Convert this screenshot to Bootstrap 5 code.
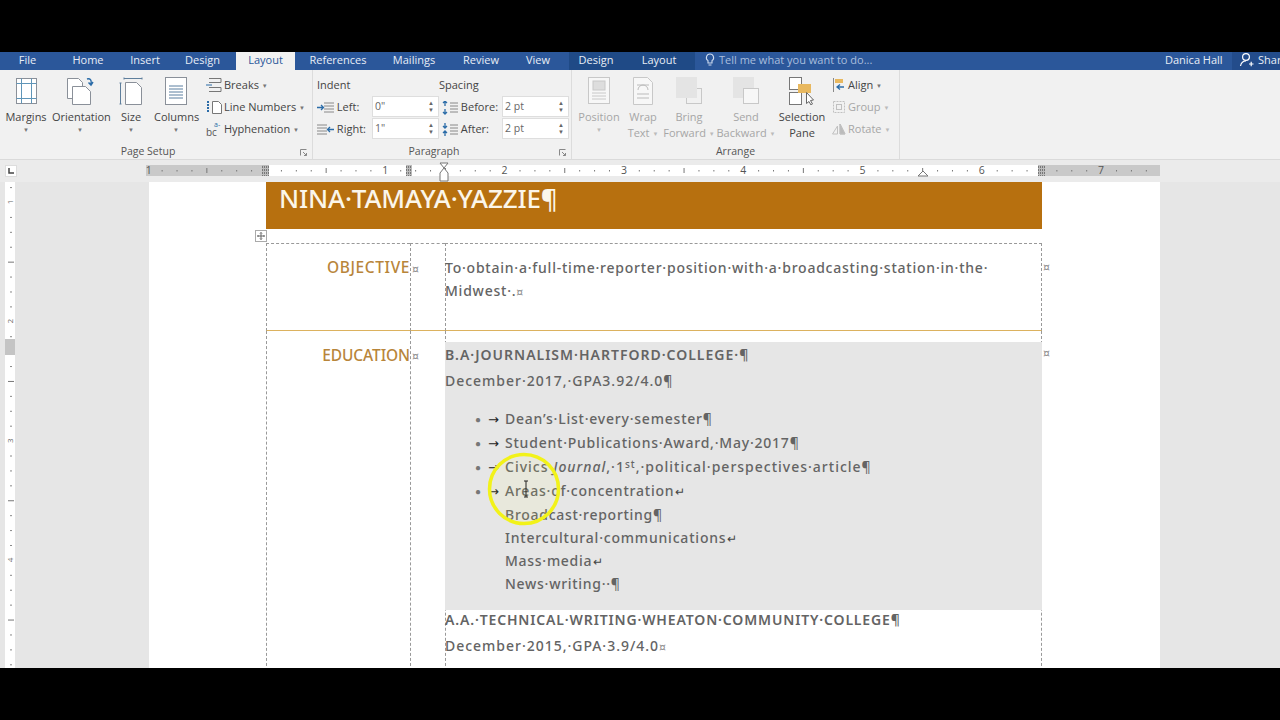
<!DOCTYPE html>
<html lang="en">
<head>
<meta charset="UTF-8">
<title>Word - Layout</title>
<link href="https://cdn.jsdelivr.net/npm/bootstrap@5.3.3/dist/css/bootstrap.min.css" rel="stylesheet">
<style>
html,body{margin:0;height:720px;overflow:hidden;background:#000}
.frame{width:1280px;height:616px;margin-top:52px;overflow:hidden;font-family:"Open Sans","Liberation Sans",sans-serif;font-size:11px;color:#444;background:#e6e6e6}
/* title / tab bar */
.tabbar{height:18px;background:#2b579a;color:#e8eef7;font-size:11px;line-height:15px}
.tabitem{text-align:center;flex:none}
.tabfile{width:55px}
.tabhome{width:66px}
.tabinsert{width:48px}
.tabdesign{width:67px}
.tablayout{width:59px;background:#f1f1f1;color:#2b579a}
.tabrefs{width:86px}
.tabmail{width:66px}
.tabreview{width:68px}
.tabview{width:46px}
.ctxband{background:#1f4a86;width:126px;flex:none;margin-left:8px}
.ctxdesign{width:54px}
.ctxlayout{width:72px}
.tellme{color:#a9bedd;width:470px;flex:none;padding-left:10px;padding-bottom:3px}
.username{width:67px;flex:none;white-space:nowrap}
.shareitem{background:#234c8b;width:48px;flex:none;padding-left:7px;padding-bottom:3px;white-space:nowrap;overflow:hidden}
.shareitem svg{flex:none}
/* ribbon */
.ribbon{height:90px;background:#f1f1f1;border-bottom:1px solid #dadada}
.rgroup{height:89px;border-right:1px solid #dcdcdc;position:relative}
.grouplabel{height:16px;line-height:16px;text-align:center;color:#555;font-size:10.5px;margin-top:auto}
.launcher{position:absolute;right:5px;bottom:3px}
.bigbtn{flex:none;text-align:center;line-height:15.5px;padding-top:7px;white-space:nowrap}
.bigbtn svg{display:block;margin:0 auto 4px;height:28px}
.caret{font-size:6px;line-height:11px;color:#777;display:block}
.inlinecaret{font-size:6px;color:#777;vertical-align:1px}
.dim{color:#a6a6a6}
.dim .caret,.dim .inlinecaret{color:#bbb}
.smallcol{padding-top:4px}
.smallbtn{height:22px;line-height:22px;white-space:nowrap}
.smallbtn svg{vertical-align:-4px;margin-right:2px}
.spinrow{height:22px;line-height:21px;white-space:nowrap}
.spinrow svg{vertical-align:-4px}
.spinlabel{width:56px}
.spinlabel2{width:63px;padding-left:3px}
.spinbox{width:67px;height:21px;background:#fff;border:1px solid #dedede;padding-left:2px;position:relative;flex:none;line-height:19px;font-size:10.5px;color:#666}
.spinarrows{position:absolute;right:4px;top:3px;font-size:6px;line-height:7px;color:#666}
/* rulers */
.rulerbar{height:22px;background:#ebebeb}
.cornerbtn{width:12px;height:12px;margin:5px 0 0 5px;background:#fff;border:1px solid #ddd}
.docarea{height:486px}
.vruler{width:10px;margin-left:5px;flex:none;background:#fff;height:486px;overflow:visible}
/* page */
.pagesheet{width:1011px;margin-left:134px;flex:none;background:#fff;height:486px;padding-left:117px;overflow:hidden;position:relative;font-family:"Noto Sans","Liberation Sans",sans-serif;font-size:14px;font-weight:500;letter-spacing:.77px;color:#646464}
.namebar{width:776px;height:47px;background:#b7700f;color:#fbf6ea;font-size:26px;line-height:33px;padding-left:13px;letter-spacing:-.16px}
.tablegrid{display:grid;grid-template-columns:144px 35px 597px 20px;margin-top:14px;width:796px}
.cellhead{border-left:1px dashed #999;color:#b8853a;text-align:right;font-size:15.5px}
.headobj{letter-spacing:.6px}
.headedu{letter-spacing:-.1px}
.cellgap{border-left:1px dashed #999;padding-left:1px}
.cellmain{border-left:1px dashed #999;border-right:1px dashed #999}
.cellinner{margin-left:-1px;margin-right:-1px}
.cellmark{color:#8b8b8b;font-family:"DejaVu Sans",sans-serif;font-size:11px;font-weight:400;letter-spacing:0}
.endmark{padding-left:1px}
.endfirst{padding-top:11px;line-height:23px}
.endsecond{padding-top:8px;line-height:26px}
.toprow{border-top:1px dashed #999;height:88px;padding-top:12px;line-height:23px}
.nextrow{height:340px;padding-top:11px;line-height:26px}
.goldline{border-bottom:1px solid #dcb25f}
.graybox{background:#e6e6e6;height:268px}
.boldline{font-weight:600;height:26px;line-height:26px;letter-spacing:1px}
.secondhead{line-height:20px;height:23px;letter-spacing:.85px}
.plainline{height:26px;line-height:26px;letter-spacing:.98px}
.bullets{padding-top:13px;height:216px}
.bulletline{padding-left:30px;height:24px;line-height:24px;white-space:nowrap;letter-spacing:.78px}
.bulletline i{font-style:italic}
.bulletline sup{font-size:10px;top:-.4em}
.wideline{letter-spacing:1px}
.dotmark{display:inline-block;width:13px;color:#777;font-size:10px;vertical-align:1px;letter-spacing:0}
.arrowmark{display:inline-block;width:17px;color:#222;font-size:13px;letter-spacing:0;font-family:"DejaVu Sans",sans-serif;font-weight:400}
.subline{padding-left:60px;height:23px;line-height:23px;white-space:nowrap;letter-spacing:.72px}
.sublinewide{letter-spacing:.8px}
.nomark{font-size:12px;color:#444;letter-spacing:0;margin-left:1px}
/* overlays */
.cursorring{position:absolute;left:338px;top:270px;pointer-events:none}
.tablemove{position:absolute;left:106px;top:48px;line-height:0}
</style>
</head>
<body>
<div class="frame">
  <div class="tabbar d-flex">
    <div class="tabitem tabfile">File</div>
    <div class="tabitem tabhome">Home</div>
    <div class="tabitem tabinsert">Insert</div>
    <div class="tabitem tabdesign">Design</div>
    <div class="tabitem tablayout">Layout</div>
    <div class="tabitem tabrefs">References</div>
    <div class="tabitem tabmail">Mailings</div>
    <div class="tabitem tabreview">Review</div>
    <div class="tabitem tabview">View</div>
    <div class="ctxband d-flex">
      <div class="tabitem ctxdesign">Design</div>
      <div class="tabitem ctxlayout">Layout</div>
    </div>
    <div class="tellme d-flex align-items-center gap-1">
      <svg width="10" height="13" viewBox="0 0 10 13" fill="none" stroke="#cfdcf0" stroke-width="1.1"><path d="M5 1a3.6 3.6 0 0 0-2 6.6V10h4V7.6A3.6 3.6 0 0 0 5 1zM3.5 12h3"/></svg>
      <span>Tell me what you want to do...</span>
    </div>
    <div class="username">Danica Hall</div>
    <div class="shareitem d-flex align-items-center gap-1">
      <svg width="15" height="15" viewBox="0 0 15 15" fill="none" stroke="#fff" stroke-width="1.2"><circle cx="7" cy="5" r="3.4"/><path d="M1.500 14c.6-3 2.600-5 5.500-5M10 12h4.500M12.200 9.700v4.600"/></svg>
      <span>Share</span>
    </div>
  </div>

  <div class="ribbon d-flex">
    <div class="rgroup d-flex flex-column" style="width:313px">
      <div class="d-flex">
        <div class="bigbtn" style="width:52px">
          <svg width="24" height="28" viewBox="0 0 24 28" fill="#fff" stroke="#8a9099"><rect x="2.500" y="1.500" width="20" height="25"/><path d="M2.500 6.500h20M2.500 21.500h20M7.500 1.500v25M17.500 1.500v25" stroke="#5f95b8"/></svg>
          Margins<span class="caret">▼</span>
        </div>
        <div class="bigbtn" style="width:56px">
          <svg width="30" height="28" viewBox="0 0 30 28" fill="#fff" stroke="#8a9099"><path d="M2.500 1.500h11l4 4v16h-15z"/><path d="M7.500 9.500h13l5 5v13h-18z"/><path d="M22 2c3-1 5 1 4 5M28 5l-2 3-2.500-2.500" stroke="#2b6ca8" stroke-width="1.500" fill="none"/></svg>
          Orientation<span class="caret">▼</span>
        </div>
        <div class="bigbtn" style="width:46px">
          <svg width="24" height="28" viewBox="0 0 24 28" fill="#fff" stroke="#8a9099"><path d="M6.500 5.500h11l5 5v17h-16z"/><path d="M5 1.500h18M5 .5v2M23 .5v2M1.500 6v21M.5 6h2M.5 27h2" stroke="#5f7f9c" fill="none"/></svg>
          Size<span class="caret">▼</span>
        </div>
        <div class="bigbtn" style="width:44px">
          <svg width="22" height="28" viewBox="0 0 22 28" fill="#fff" stroke="#8a9099"><rect x=".5" y=".5" width="21" height="27"/><path d="M4 9h14M4 12h14M4 15h14M4 18h14M4 21h14" stroke="#5b7fa0"/></svg>
          Columns<span class="caret">▼</span>
        </div>
        <div class="smallcol ms-2">
          <div class="smallbtn"><svg width="16" height="16" viewBox="0 0 16 16" fill="none" stroke="#777"><path d="M3 1.500h12v4H3M3 14.500h12v-4H3"/><path d="M0 8h6" stroke="#2b6ca8"/></svg>Breaks <span class="inlinecaret">▼</span></div>
          <div class="smallbtn"><svg width="16" height="16" viewBox="0 0 16 16" fill="none" stroke="#777"><path d="M6.500 2.500h6l3 3v9h-9z" fill="#fff"/><path d="M2 2v12" stroke="#2b6ca8" stroke-dasharray="2 1" stroke-width="2"/></svg>Line Numbers <span class="inlinecaret">▼</span></div>
          <div class="smallbtn"><svg width="16" height="16" viewBox="0 0 16 16"><text x="0" y="15" font-size="10" fill="#555" font-family="Open Sans">bc</text><text x="8" y="6" font-size="7" fill="#2b6ca8" font-family="Open Sans">a-</text></svg>Hyphenation <span class="inlinecaret">▼</span></div>
        </div>
      </div>
      <div class="grouplabel pe-3">Page Setup</div>
      <svg class="launcher" width="7" height="7" viewBox="0 0 7 7" fill="none" stroke="#888"><path d="M.5 6.500v-6h6M3 3l3.500 3.500M4 6.500h2.500V4"/></svg>
    </div>

    <div class="rgroup d-flex flex-column" style="width:259px">
      <div class="d-flex" style="padding:7px 0 0 4px">
        <div style="width:122px">
          <div style="height:19px">Indent</div>
          <div class="spinrow d-flex"><div class="spinlabel"><svg width="17" height="14" viewBox="0 0 17 14" fill="none" stroke="#888"><path d="M7 2h10M7 5h10M7 8h10M7 11h10"/><path d="M0 6.500h6M4 4l2.500 2.500L4 9" stroke="#2b6ca8" stroke-width="1.300"/></svg> Left:</div><div class="spinbox">0"<div class="spinarrows">▲<br>▼</div></div></div>
          <div class="spinrow d-flex"><div class="spinlabel"><svg width="17" height="14" viewBox="0 0 17 14" fill="none" stroke="#888"><path d="M0 2h10M0 5h10M0 8h10M0 11h10"/><path d="M17 6.500h-6M13 4l-2.500 2.500L13 9" stroke="#2b6ca8" stroke-width="1.300"/></svg> Right:</div><div class="spinbox">1"<div class="spinarrows">▲<br>▼</div></div></div>
        </div>
        <div>
          <div style="height:19px">Spacing</div>
          <div class="spinrow d-flex"><div class="spinlabel2"><svg width="16" height="14" viewBox="0 0 16 14" fill="none" stroke="#888"><path d="M8 5h8M8 8h8M8 11h8M8 2h8"/><path d="M3 0v5M1 2l2-2 2 2M3 8v5M1 11l2 2 2-2" stroke="#2b6ca8" stroke-width="1.300"/></svg> Before:</div><div class="spinbox">2 pt<div class="spinarrows">▲<br>▼</div></div></div>
          <div class="spinrow d-flex"><div class="spinlabel2"><svg width="16" height="14" viewBox="0 0 16 14" fill="none" stroke="#888"><path d="M8 5h8M8 8h8M8 11h8M8 2h8"/><path d="M3 5V0M1 3l2 2 2-2M3 13V8M1 10l2-2 2 2" stroke="#2b6ca8" stroke-width="1.300"/></svg> After:</div><div class="spinbox">2 pt<div class="spinarrows">▲<br>▼</div></div></div>
        </div>
      </div>
      <div class="grouplabel pe-3">Paragraph</div>
      <svg class="launcher" width="7" height="7" viewBox="0 0 7 7" fill="none" stroke="#888"><path d="M.5 6.500v-6h6M3 3l3.500 3.500M4 6.500h2.500V4"/></svg>
    </div>

    <div class="rgroup d-flex flex-column" style="width:328px">
      <div class="d-flex">
        <div class="bigbtn dim" style="width:50px;margin-left:2px">
          <svg width="22" height="28" viewBox="0 0 22 28" fill="#f7f7f7" stroke="#c8c8c8"><rect x=".5" y=".5" width="21" height="26"/><rect x="5" y="4" width="12" height="9" fill="#ddd"/><path d="M4 16h14M4 19h14M4 22h14"/></svg>
          Position<span class="caret">▼</span>
        </div>
        <div class="bigbtn dim" style="width:38px">
          <svg width="20" height="28" viewBox="0 0 20 28" fill="#f7f7f7" stroke="#c8c8c8"><path d="M.5.5h14l5 5v22H.5z"/><path d="M5 13a5 5 0 0 1 10 0M4 8h12M4 17h12M4 21h12" fill="none" stroke="#bbb"/></svg>
          Wrap<br>Text <span class="inlinecaret">▼</span>
        </div>
        <div class="bigbtn dim" style="width:54px">
          <svg width="26" height="28" viewBox="0 0 26 28" fill="none" stroke="#c8c8c8"><rect x="10.500" y="11.500" width="15" height="15"/><rect x="0" y="0" width="21" height="21" fill="#e4e4e4" stroke="none"/></svg>
          Bring<br>Forward <span class="inlinecaret">▼</span>
        </div>
        <div class="bigbtn dim" style="width:60px">
          <svg width="26" height="28" viewBox="0 0 26 28" fill="none" stroke="#c8c8c8"><rect x="0" y="0" width="21" height="21" fill="#e4e4e4" stroke="none"/><rect x="10.500" y="11.500" width="15" height="15" fill="#f7f7f7"/></svg>
          Send<br>Backward <span class="inlinecaret">▼</span>
        </div>
        <div class="bigbtn" style="width:52px">
          <svg width="26" height="28" viewBox="0 0 26 28" fill="#fff" stroke="#777"><rect x=".5" y=".5" width="12" height="12"/><rect x=".5" y="15.500" width="12" height="12"/><rect x="9" y="7" width="13" height="9" fill="#e8b85f" stroke="none"/><path d="M17.500 15.500v11l2.500-2 2 3.500 1.500-1-2-3.500 3-.5z" stroke="#666"/></svg>
          Selection<br>Pane
        </div>
        <div class="smallcol ms-1">
          <div class="smallbtn"><svg width="14" height="16" viewBox="0 0 14 16" fill="none" stroke="#888"><path d="M1.500 1v14"/><path d="M3 2h8v4H3" fill="#e8b85f" stroke="none"/><path d="M12 10H5M8 7.500 5 10l3 2.500" stroke="#2b6ca8" stroke-width="1.300"/></svg>Align <span class="inlinecaret">▼</span></div>
          <div class="smallbtn dim"><svg width="14" height="16" viewBox="0 0 14 16" fill="none" stroke="#c0c0c0"><rect x="1.500" y="2.500" width="11" height="11" stroke-dasharray="2 1"/><rect x="4.500" y="5.500" width="5" height="5"/></svg>Group <span class="inlinecaret">▼</span></div>
          <div class="smallbtn dim"><svg width="14" height="16" viewBox="0 0 14 16" fill="#bbb" stroke="#c0c0c0"><path d="M8 3v10h5zM5.500 5 .5 13h5z" fill="none"/><path d="M8 3v10h5z"/></svg>Rotate <span class="inlinecaret">▼</span></div>
        </div>
      </div>
      <div class="grouplabel">Arrange</div>
    </div>
  </div>

  <div class="rulerbar d-flex">
    <div class="cornerbtn d-flex align-items-center justify-content-center">
      <svg width="6" height="6" viewBox="0 0 6 6" fill="none" stroke="#444" stroke-width="1.500"><path d="M1 0v5h5"/></svg>
    </div>
    <svg id="hruler" width="1014" height="22" viewBox="146 160 1014 22" style="margin-left:129px;flex:none"></svg>
  </div>

  <div class="docarea d-flex">
    <svg id="vruler" class="vruler" width="10" height="486" viewBox="5 182 10 486"></svg>
    <div class="pagesheet">
      <div class="namebar">NINA·TAMAYA·YAZZIE¶</div>
      <div class="tablegrid">
        <div class="cellhead toprow goldline"><span class="headobj">OBJECTIVE</span></div>
        <div class="cellgap toprow goldline"><span class="cellmark">¤</span></div>
        <div class="cellmain toprow goldline"><div class="cellinner">To·obtain·a·full-time·reporter·position·with·a·broadcasting·station·in·the·<br>Midwest·.<span class="cellmark">¤</span></div></div>
        <div class="endmark endfirst"><span class="cellmark">¤</span></div>

        <div class="cellhead nextrow"><span class="headedu">EDUCATION</span></div>
        <div class="cellgap nextrow"><span class="cellmark">¤</span></div>
        <div class="cellmain nextrow">
          <div class="cellinner">
            <div class="graybox">
              <div class="boldline">B.A·JOURNALISM·HARTFORD·COLLEGE·¶</div>
              <div class="plainline">December·2017,·GPA3.92/4.0¶</div>
              <div class="bullets">
                <div class="bulletline"><span class="dotmark">●</span><span class="arrowmark">→</span>Dean’s·List·every·semester¶</div>
                <div class="bulletline"><span class="dotmark">●</span><span class="arrowmark">→</span>Student·Publications·Award,·May·2017¶</div>
                <div class="bulletline wideline"><span class="dotmark">●</span><span class="arrowmark">→</span>Civics·<i>Journal</i>,·1<sup>st</sup>,·political·perspectives·article¶</div>
                <div class="bulletline"><span class="dotmark">●</span><span class="arrowmark">→</span>Areas·of·concentration<span class="nomark">↵</span></div>
                <div class="subline">Broadcast·reporting¶</div>
                <div class="subline sublinewide">Intercultural·communications<span class="nomark">↵</span></div>
                <div class="subline">Mass·media<span class="nomark">↵</span></div>
                <div class="subline">News·writing··¶</div>
              </div>
            </div>
            <div class="boldline secondhead">A.A.·TECHNICAL·WRITING·WHEATON·COMMUNITY·COLLEGE¶</div>
            <div class="plainline">December·2015,·GPA·3.9/4.0<span class="cellmark">¤</span></div>
          </div>
        </div>
        <div class="endmark endsecond"><span class="cellmark">¤</span></div>
      </div>
      <svg class="tablemove" width="12" height="12" viewBox="0 0 12 12" fill="none" stroke="#666"><rect x=".5" y=".5" width="11" height="11" fill="#fff" stroke="#aaa"/><path d="M6 2.500v7M2.500 6h7M5 3.500l1-1 1 1M5 8.500l1 1 1-1M3.500 5l-1 1 1 1M8.500 5l1 1-1 1"/></svg>
      <svg class="cursorring" width="74" height="74" viewBox="0 0 74 74">
        <circle cx="37" cy="37" r="34.500" fill="#ffff66" fill-opacity=".08" stroke="#f2f219" stroke-width="3.500"/>
        <path d="M37 29h4M39 29v16M37 45h4" stroke="#222" stroke-width="1" fill="none"/>
      </svg>
    </div>
  </div>
</div>
<script src="https://cdn.jsdelivr.net/npm/bootstrap@5.3.3/dist/js/bootstrap.bundle.min.js"></script>
<script>
// rulers: one inch is 119.3px, origin at the page's left text edge (266)
var inch = 119.3, svgNs = "http://www.w3.org/2000/svg";
function add(svg, tag, attrs, text){
    var el = document.createElementNS(svgNs, tag);
    for(var k in attrs) el.setAttribute(k, attrs[k]);
    if(text) el.textContent = text;
    svg.appendChild(el);
}
function hatch(svg, x, w){
    add(svg, "rect", {x:x, y:165, width:w, height:11, fill:"#bbb"});
    for(var n = 0; n < w; n += 2) add(svg, "rect", {x:x + n, y:165, width:1, height:11, fill:"#777"});
    for(var m = 0; m < 11; m += 3) add(svg, "rect", {x:x, y:165 + m, width:w, height:1, fill:"#bbb"});
}
var h = document.getElementById("hruler");
add(h, "rect", {x:146, y:165, width:1014, height:11, fill:"#c9c9c9"});
add(h, "rect", {x:265, y:165, width:776, height:11, fill:"#fff"});
for(var i = -8; i < 64; i++){
    var x = 266 + i * inch / 8;
    if(x < 150 && i != -8) continue;
    if(x > 1150) continue;
    if(i % 8 == 0){
        add(h, "text", {x:x + (i == -8 ? 2 : 0), y:174, "text-anchor":"middle", "font-size":"10.5", fill:"#555", "font-family":"Open Sans"}, String(Math.abs(i / 8)));
    } else if(i % 4 == 0){
        add(h, "rect", {x:x, y:168, width:1, height:5, fill:"#777"});
    } else {
        add(h, "rect", {x:x, y:170, width:1, height:1.5, fill:"#777"});
    }
}
// margin and column markers
hatch(h, 262, 7);
hatch(h, 1038, 7);
hatch(h, 406, 6);
add(h, "path", {d:"M440 163h8l-4 5 4 5v8h-8v-8l4-5z", fill:"#fff", stroke:"#777"});
add(h, "path", {d:"M918 176l5-5 5 5z", fill:"#fff", stroke:"#777"});

var v = document.getElementById("vruler");
for(var j = -1; j < 40; j++){
    var y = 202 + j * inch / 8;
    if(y > 668) break;
    if(j % 8 == 0){
        add(v, "text", {x:10, y:y + 3, "text-anchor":"middle", "font-size":"8", fill:"#666", "font-family":"Open Sans", transform:"rotate(-90 10 " + y + ")"}, String(j / 8 + 1));
    } else if(j % 4 == 0){
        add(v, "rect", {x:8, y:y, width:6, height:1, fill:"#777"});
    } else {
        add(v, "rect", {x:10, y:y, width:2, height:1, fill:"#888"});
    }
}
add(v, "rect", {x:5, y:339, width:10, height:16, fill:"#c4c4c4"});
</script>
</body>
</html>
